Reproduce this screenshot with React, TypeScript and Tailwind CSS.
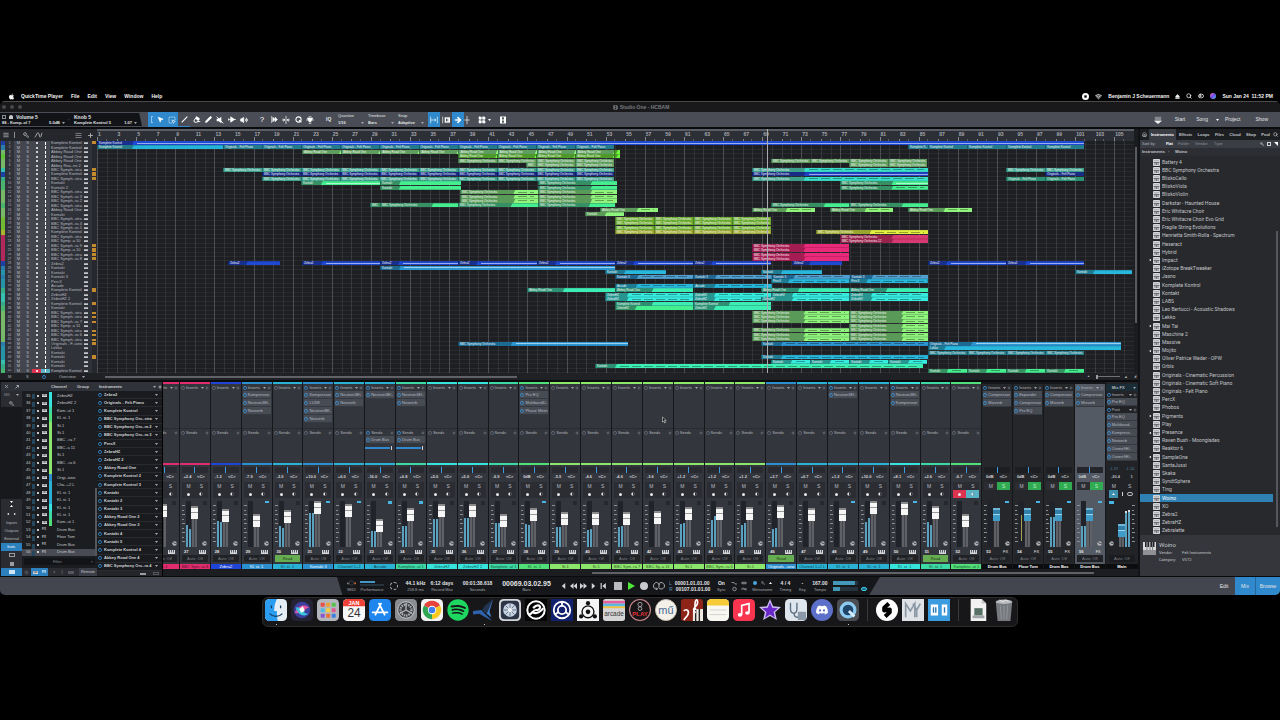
import type { ReactNode } from "react";
import {
  AlignJustify,
  ArrowRight,
  AudioWaveform,
  Film,
  FoldHorizontal,
  GripVertical,
  House,
  LayoutGrid,
  MousePointer2,
  Pencil,
  Plus,
  Search,
  SquareDashedMousePointer,
  ToggleLeft,
  Volume2,
  Wifi,
  Wrench,
  X,
} from "lucide-react";
import { FaApple, FaDiscord, FaEject, FaEraser, FaSpotify } from "react-icons/fa";

/* ---------- data ---------- */

const CANVAS_START = 97;
const CANVAS_WIDTH = 1037;

type Tone = { dark: string; bright: string };

const tones: Record<string, Tone> = {
  royal: { dark: "bg-[#172f8f]", bright: "bg-[#1f49d2]" },
  navy: { dark: "bg-[#182b85]", bright: "bg-[#2140c4]" },
  teal: { dark: "bg-[#237c8b]", bright: "bg-[#22b4da]" },
  sky: { dark: "bg-[#1c6a94]", bright: "bg-[#2c95d2]" },
  steel: { dark: "bg-[#1f6591]", bright: "bg-[#519fce]" },
  cyan: { dark: "bg-[#1d7c94]", bright: "bg-[#28b8dc]" },
  aqua: { dark: "bg-[#27958f]", bright: "bg-[#35ecdf]" },
  sea: { dark: "bg-[#3b9f8c]", bright: "bg-[#35dfca]" },
  mint: { dark: "bg-[#2c9174]", bright: "bg-[#3deeb4]" },
  jade: { dark: "bg-[#359164]", bright: "bg-[#45ef8f]" },
  leaf: { dark: "bg-[#5a9a58]", bright: "bg-[#8ef47c]" },
  fern: { dark: "bg-[#5f9c60]", bright: "bg-[#8ef47c]" },
  grass: { dark: "bg-[#4d9a2b]", bright: "bg-[#6dfa3c]" },
  lime: { dark: "bg-[#6aaa31]", bright: "bg-[#8de04a]" },
  olive: { dark: "bg-[#99a52e]", bright: "bg-[#e2ee40]" },
  wine: { dark: "bg-[#97234c]", bright: "bg-[#d53a70]" },
  pink: { dark: "bg-[#a51c52]", bright: "bg-[#e92a7b]" },
};

type Clip = { from: number; to: number; label: string; tone: string; split?: number; notes?: "light" | "dark" };

const clip = (from: number, to: number, label: string, tone: string, split?: number, notes?: "light" | "dark"): Clip => ({
  from,
  to,
  label,
  tone,
  split,
  notes,
});

const repeat = (from: number, count: number, label: string, tone: string, split?: number, step = 39.12): Clip[] =>
  Array.from({ length: count }, (_, i) => ({
    from: from + i * step,
    to: from + (i + 1) * step,
    label,
    tone,
    split: split ? from + i * step + split : undefined,
    notes: split ? "dark" : undefined,
  }));

const BBC = "BBC Symphony Orchestra";
const FELT = "Originals - Felt Piano";
const KK = "Komplete Kontrol";
const ARO = "Abbey Road One";

const strings = [clip(752, 849, BBC, "leaf", 803, "dark"), clip(849, 928, BBC, "leaf", 901, "dark")];
const divisi = [clip(460, 538, BBC, "leaf", 513, "dark"), clip(538, 617, BBC, "leaf", 590, "dark")];

const clips: Record<number, Clip[]> = {
  1: [clip(97, 1084, KK, "royal", 131, "light")],
  2: [clip(97, 223, KK, "teal", 131), ...repeat(223, 10, FELT, "teal"), clip(908, 928, "Komplete K..", "teal"), ...repeat(928, 4, KK, "teal")],
  3: [...repeat(302, 8, ARO, "fern", 37), clip(614, 620, "", "grass", 614)],
  4: [...repeat(458, 4, ARO, "grass", 37), clip(614, 620, "", "grass", 614)],
  5: [...repeat(458, 4, BBC, "fern"), ...repeat(771, 4, BBC, "fern")],
  6: [clip(526, 536, "BBC", "fern"), ...repeat(536, 2, BBC, "fern"), ...repeat(849, 2, BBC, "fern")],
  7: [...repeat(223, 10, BBC, "sea"), clip(752, 928, BBC, "sea", 803, "dark"), ...repeat(1006, 2, BBC, "sea")],
  8: [...repeat(262, 9, BBC, "navy"), clip(752, 928, BBC, "navy", 803, "light"), clip(1045, 1084, FELT, "navy")],
  9: [...repeat(262, 9, BBC, "sea"), clip(752, 928, BBC, "sea", 803, "dark"), ...repeat(1006, 2, FELT, "mint")],
  10: [clip(301, 380, "Kontakt", "jade", 320, "light"), clip(380, 461, "Kontakt", "jade", 398), clip(538, 617, BBC, "jade", 590), clip(840, 928, BBC, "jade", 891, "light")],
  11: [clip(380, 461, "Kontakt", "jade", 398), clip(538, 617, BBC, "jade", 590), clip(840, 928, BBC, "jade", 891, "dark")],
  12: divisi,
  13: divisi,
  14: divisi,
  15: [
    clip(370, 380, "BBC", "jade"),
    clip(380, 458, BBC, "jade", 431),
    clip(458, 538, BBC, "jade", 510),
    clip(538, 615, BBC, "jade", 588),
    clip(771, 849, BBC, "jade", 823),
    clip(849, 928, BBC, "jade", 901),
  ],
  16: [clip(600, 658, ARO, "leaf", 636, "dark"), clip(752, 815, ARO, "leaf", 785, "dark"), clip(830, 893, ARO, "leaf", 864, "dark"), clip(908, 972, ARO, "leaf", 943, "dark")],
  17: [clip(585, 624, "Kontakt", "leaf", 604)],
  18: repeat(615, 4, BBC, "lime"),
  19: repeat(615, 4, BBC, "lime"),
  20: repeat(615, 4, BBC, "lime"),
  21: [...repeat(615, 4, BBC, "olive"), clip(816, 928, BBC, "olive", 869, "dark")],
  22: [clip(840, 928, BBC, "wine", 891)],
  23: [clip(840, 928, BBC + " 12", "wine", 891)],
  24: [clip(752, 849, BBC, "pink", 803)],
  25: [clip(752, 849, BBC, "pink", 803)],
  26: [clip(752, 849, BBC, "pink", 803)],
  27: [clip(752, 849, BBC, "pink", 803)],
  28: [
    clip(228, 280, "Zebra2", "royal", 245),
    clip(302, 380, "Zebra2", "royal", 320, "light"),
    clip(380, 458, "Zebra2", "royal", 397, "light"),
    clip(458, 537, "Zebra2", "royal", 475, "light"),
    clip(537, 615, "Zebra2", "royal", 554, "light"),
    clip(615, 693, "Zebra2", "royal", 632, "light"),
    clip(693, 771, "Zebra2", "royal", 710, "light"),
    clip(792, 842, "Zebra2", "royal", 808),
    clip(928, 1006, "Zebra2", "royal", 945, "light"),
    clip(1006, 1084, "Zebra2", "royal", 1024, "light"),
  ],
  29: [clip(380, 615, "Kontakt", "sky", 398, "light")],
  30: [clip(605, 666, "Kontakt", "cyan", 623), clip(761, 822, "Kontakt", "cyan", 780), clip(1075, 1132, "Kontakt", "cyan", 1092)],
  31: repeat(615, 4, "Kontakt 3", "steel", 21, 78.25),
  32: repeat(771, 2, "PercX", "cyan", 16, 78.25),
  33: repeat(615, 2, "Arcade", "cyan", 20, 78.25),
  34: [clip(527, 615, ARO, "mint", 562), clip(615, 693, ARO, "mint", 651), clip(761, 849, ARO, "mint", 797), clip(849, 928, ARO, "mint", 885)],
  35: [clip(605, 693, "ZebraHZ", "aqua", 626, "dark"), clip(693, 771, "ZebraHZ", "aqua", 713, "dark"), clip(771, 849, "ZebraHZ", "aqua", 791, "dark"), clip(849, 928, "ZebraHZ", "aqua", 870, "dark")],
  36: [clip(605, 693, "ZebraHZ", "aqua", 626, "dark"), clip(693, 771, "ZebraHZ", "aqua", 713, "dark"), clip(761, 849, "ZebraHZ", "aqua", 791, "dark"), clip(849, 928, "ZebraHZ", "aqua", 870, "dark")],
  37: [clip(615, 693, KK, "mint", 651), clip(693, 771, KK, "mint", 728)],
  38: [clip(615, 693, "ZebraHZ", "jade", 634), clip(693, 771, "ZebraHZ", "mint", 713)],
  39: strings,
  40: strings,
  41: strings,
  42: [clip(849, 928, BBC, "leaf", 901, "dark")],
  43: strings,
  44: strings,
  45: strings,
  46: [clip(458, 628, BBC, "sky", 510, "light"), clip(761, 928, "Kontakt", "sky", 780, "dark"), clip(928, 1121, FELT, "sky", 970, "light")],
  47: [clip(928, 1121, "Lekko", "cyan", 943)],
  48: repeat(928, 4, BBC, "teal"),
  49: [clip(761, 928, "Kontakt", "cyan", 780, "dark")],
  50: repeat(771, 4, "Kontakt", "aqua", 19),
  51: [clip(595, 923, "Kontakt", "mint", 614, "dark")],
  52: repeat(928, 4, "Kontakt", "jade", 18),
};

const trackNames = [
  KK, KK, ARO, ARO, ARO, "Abbey Roa..ne 2", "BBC Symph..stra", KK, "BBC Symph..stra", "Kontakt", "Kontakt 2",
  "BBC Symph..stra", "BBC Symph..ra 3", "BBC Symph..ra 2", "BBC Symph..stra", ARO, "Kontakt", "BBC Symph..stra",
  "BBC Symph..ra 4", "BBC Symph..ra 5", KK, "BBC Symph..stra", "BBC Symp..a 10", "BBC Symph..ra 9", "BBC Symp..a 10",
  "BBC Symph..stra", "BBC Symph..ra 8", "Zebra2", "Kontakt", "Kontakt", "Kontakt 3", "PercX", "Arcade", KK, "ZebraHZ",
  "ZebraHZ 2", KK, "Kontakt", "BBC Symph..stra", "BBC Symph..stra", "BBC Symph..ra 7", "BBC Symp..a 11",
  "BBC Symph..stra", "BBC Symph..ra 6", "BBC Symph..stra", "Originals - F..iano", "Lekko", "Kontakt", "Kontakt",
  "Kontakt", "Kontakt", KK,
];

const automated = [1, 7, 8, 9, 24, 25, 26, 27, 34, 37, 46, 49];
const halfAutomated = [39, 40, 41, 43, 44, 45];

function trackColor(n: number) {
  if (n === 1 || n === 8 || n === 28) return "bg-[#1e3fa8]";
  if (n === 2 || n === 29 || n === 31 || n === 46) return "bg-[#2a7cab]";
  if (n === 7 || n === 35 || n === 36 || n === 50) return "bg-[#35c0b0]";
  if (n === 9 || n === 34 || n === 37 || n === 51) return "bg-[#37ab86]";
  if (n >= 30 && n <= 33) return "bg-[#2593a8]";
  if (n >= 47 && n <= 49) return "bg-[#2593a8]";
  if (n >= 22 && n <= 27) return "bg-[#b3285c]";
  if (n === 21) return "bg-[#a9b52e]";
  if (n >= 18 && n <= 20) return "bg-[#71bb33]";
  if (n === 10 || n === 11 || n === 15 || n === 38 || n === 52) return "bg-[#48b46d]";
  if (n === 4) return "bg-[#60c43a]";
  return "bg-[#77b868]";
}

type Strip = {
  n: number;
  name: string;
  db: string;
  fader: number;
  meter?: [number, number];
  color?: string;
  inserts?: string[];
  send?: boolean;
  read?: boolean;
  clip?: "thin" | "full";
};

const C = {
  pink: "bg-[#e12c6d]",
  blue: "bg-[#2045d6]",
  sky: "bg-[#2c8fce]",
  cyan: "bg-[#29b2d4]",
  mint: "bg-[#3cd9a4]",
  aqua: "bg-[#36e4dd]",
  green: "bg-[#50df78]",
  lime: "bg-[#8de66c]",
};

// fader = cap offset from the top of its travel, meter = [left, right] heights
const strips: Strip[] = [
  { n: 27, name: "BBC Sym..ra 8", db: "+2.4", fader: 5, meter: [22, 18], color: C.pink },
  { n: 28, name: "Zebra2", db: "-1.2", fader: 8, meter: [26, 25], color: C.blue },
  { n: 29, name: "Kl. st. 1", db: "-7.9", fader: 13, color: C.sky, inserts: ["Kompressor", "Neutron3El..", "Neoverb"], clip: "thin" },
  { n: 30, name: "Kl. st. 1", db: "-2.0", fader: 9, meter: [21, 19], color: C.cyan, read: true },
  { n: 31, name: "Kontakt 3", db: "+10.0", fader: 0, meter: [34, 34], color: C.sky, inserts: ["Kompressor", "LUXE", "Neutron3El..", "Neoverb"], clip: "thin" },
  { n: 32, name: "Channel 1+2", db: "+6.0", fader: 3, color: C.cyan, inserts: ["Neutron3El..", "Neoverb"], clip: "thin" },
  { n: 33, name: "Arcade", db: "-16.0", fader: 18, meter: [16, 16], color: C.cyan, inserts: ["Neutron3El.."], send: true, clip: "full" },
  { n: 34, name: "Komplete..ut 1", db: "+0.8", fader: 7, meter: [21, 21], color: C.mint, inserts: ["Neutron3El..", "Neoverb"], send: true, clip: "full" },
  { n: 35, name: "ZebraHZ", db: "+5.0", fader: 3, meter: [28, 28], color: C.aqua },
  { n: 36, name: "ZebraHZ 2", db: "+5.0", fader: 3, meter: [29, 29], color: C.aqua },
  { n: 37, name: "Komplete..ut 1", db: "-6.9", fader: 13, meter: [24, 24], color: C.mint },
  { n: 38, name: "Kl. st. 1", db: "0dB", fader: 7, meter: [23, 22], color: C.green, inserts: ["Pro EQ", "MultibandD..", "Phase Meter"], clip: "thin" },
  { n: 39, name: "St.1", db: "-5.5", fader: 11, meter: [20, 20], color: C.lime },
  { n: 40, name: "St.1", db: "-4.6", fader: 11, meter: [17, 18], color: C.lime },
  { n: 41, name: "BBC Sym..ra 7", db: "-4.6", fader: 11, meter: [20, 21], color: C.lime },
  { n: 42, name: "BBC Sy..a 11", db: "-3.6", fader: 10, color: C.lime },
  { n: 43, name: "St.1", db: "+1.2", fader: 6, meter: [23, 24], color: C.lime },
  { n: 44, name: "BBC Sym..ra 6", db: "+1.2", fader: 6, meter: [27, 31], color: C.lime },
  { n: 45, name: "St.1", db: "+1.2", fader: 6, meter: [22, 24], color: C.lime },
  { n: 46, name: "Originals ..iano", db: "+3.7", fader: 4, meter: [18, 19], color: C.sky, read: true },
  { n: 47, name: "Channel 1+2 L", db: "+0.7", fader: 7, color: C.cyan },
  { n: 48, name: "Kl. st. 1", db: "+1.2", fader: 7, color: C.cyan, inserts: ["Neutron3El.."], clip: "thin" },
  { n: 49, name: "Kl. st. 1", db: "+10.0", fader: 0, meter: [25, 29], color: C.cyan },
  { n: 50, name: "Kl. st. 1", db: "+8.1", fader: 1, color: C.aqua, inserts: ["Neutron3El..", "Kompressor"], clip: "thin" },
  { n: 51, name: "Kl. st. 1", db: "+2.6", fader: 5, meter: [25, 22], color: C.mint, read: true },
  { n: 52, name: "Komplete..ut 1", db: "-6.7", fader: 13, color: C.green },
  { n: 53, name: "Drum Bus", db: "0dB", fader: 7, inserts: ["Compressor", "Mixverb"], clip: "thin" },
  { n: 54, name: "Floor Tom", db: "0dB", fader: 7, inserts: ["Expander", "Compressor", "Pro EQ"], clip: "thin" },
  { n: 55, name: "Drum Bus", db: "0dB", fader: 7, meter: [30, 30], inserts: ["Compressor", "Mixverb"], clip: "thin" },
  { n: 56, name: "Drum Bus", db: "0dB", fader: 7, meter: [21, 21], inserts: ["Compressor", "Mixverb"], clip: "thin" },
];

const channelList: [number, string, string][] = [
  [35, "ZebraHZ", C.aqua], [36, "ZebraHZ 2", C.aqua], [37, "Kom..ut 1", C.mint], [38, "Kl. st. 1", C.green],
  [39, "St.1", C.lime], [40, "St.1", C.lime], [41, "BBC ..ra 7", C.lime], [42, "BBC..a 11", C.lime], [43, "St.1", C.lime],
  [44, "BBC ..ra 6", C.lime], [45, "St.1", C.lime], [46, "Origi..iano", C.sky], [47, "Cha..+2 L", C.cyan], [48, "Kl. st. 1", C.cyan],
  [49, "Kl. st. 1", C.cyan], [50, "Kl. st. 1", C.aqua], [51, "Kl. st. 1", C.mint], [52, "Kom..ut 1", C.green],
  [53, "Drum Bus", ""], [54, "Floor Tom", ""], [55, "Drum Bus", ""], [56, "Drum Bus", ""],
];

const rack = [
  "Zebra2", FELT, KK, "BBC Symphony Orc..stra", "BBC Symphony Orc..ra 2", "BBC Symphony Orc..ra 3", "PercX", "ZebraHZ",
  "ZebraHZ 2", ARO, "Komplete Kontrol 2", "Komplete Kontrol 3", "Kontakt", "Kontakt 2", "Kontakt 3", "Abbey Road One 2",
  "Abbey Road One 3", "Kontakt 4", "Kontakt 5", "Komplete Kontrol 4", "Abbey Road One 4", "BBC Symphony Orc..ra 4",
];

const library = [
  "Battery 4", BBC, "BliskoCello", "BliskoViola", "BliskoViolin", "Darkstar - Haunted House", "Eric Whitacre Choir",
  "Eric Whitacre Choir Evo Grid", "Fragile String Evolutions", "Henrietta Smith-Rolla - Spectrum", "Hexeract", "Hybrid",
  "Impact", "iZotope BreakTweaker", "Jasno", KK, "Kontakt", "LABS", "Leo Bertucci - Acoustic Shadows", "Lekko", "Mai Tai",
  "Maschine 2", "Massive", "Mojito", "Oliver Patrice Weder - OPW", "Orbis", "Originals - Cinematic Percussion",
  "Originals - Cinematic Soft Piano", FELT, "PercX", "Phobos", "Pigments", "Play", "Presence", "Raven Bush - Moonglades",
  "Reaktor 6", "SampleOne", "SantaJussi", "Skaka", "SyndtSphere", "Ting", "Woino", "XO", "Zebra2", "ZebraHZ", "Zebralette",
];
const expandable = ["Impact", "Mai Tai", "Mojito", "Pigments", "Presence", "SampleOne"];

/* ---------- small pieces ---------- */

function Down({ className = "text-[#a5a8ae]" }: { className?: string }) {
  return (
    <svg viewBox="0 0 6 4" className={`h-[2px] w-[3px] shrink-0 ${className}`}>
      <path d="M0 0h6L3 4z" fill="currentColor" />
    </svg>
  );
}

function Keys({ className = "h-[3px] w-[5px]" }: { className?: string }) {
  return (
    <svg viewBox="0 0 7 4" preserveAspectRatio="none" className={`shrink-0 ${className}`}>
      <path d="M0 0h7v4H0z" fill="#5d6067" />
      <path d="M0 0h1v2.6h1V0h1v2.6h1V0h1v2.6h1V0h1v4H0z" fill="#d3d4d7" />
    </svg>
  );
}

function Power({ on = true }: { on?: boolean }) {
  return (
    <svg viewBox="0 0 10 10" className={`size-[4px] shrink-0 ${on ? "text-[#3b9be2]" : "text-[#70737a]"}`}>
      <circle cx="5" cy="5" r="4" fill="none" stroke="currentColor" strokeWidth="1.6" />
      <path d="M5 0v4" stroke="currentColor" strokeWidth="1.6" />
    </svg>
  );
}

function HalfDot() {
  return (
    <svg viewBox="0 0 10 10" className="size-[4px]">
      <circle cx="5" cy="5" r="4" fill="none" stroke="#8b8e95" strokeWidth="1" />
      <path d="M5 1a4 4 0 0 0 0 8z" fill="#e3e4e6" />
    </svg>
  );
}

function PanKnob() {
  return (
    <svg viewBox="0 0 10 10" className="size-[5px]">
      <circle cx="5" cy="5" r="4.5" fill="#b0b2b6" />
      <path d="M5 5L2 1M5 5h4" stroke="#34363e" strokeWidth="1.5" />
    </svg>
  );
}

/* ---------- mac menu bar ---------- */

function MenuBar() {
  return (
    <nav className="flex h-[10px] items-center justify-between pr-[7px] pl-[8px] text-[5px] font-bold text-[#f2f2f2]">
      <div className="flex items-center gap-[8px]">
        <FaApple className="mr-[-2px] size-[7px]" />
        <a href="#app">QuickTime Player</a>
        {["File", "Edit", "View", "Window", "Help"].map((item) => (
          <a key={item} href={`#${item}`}>
            {item}
          </a>
        ))}
      </div>
      <div className="flex items-center gap-[6px]">
        <svg viewBox="0 0 12 12" className="size-[7px]">
          <circle cx="6" cy="6" r="6" fill="#fff" />
          <rect x="4" y="4" width="4" height="4" fill="#000" />
        </svg>
        <Wifi className="size-[7px]" strokeWidth={3} />
        <span>Benjamin J Scheuermann</span>
        <FaEject className="size-[5px]" />
        <Search className="size-[6px]" strokeWidth={3} />
        <ToggleLeft className="size-[6px]" strokeWidth={3} />
        <span className="size-[6px] rounded-full bg-linear-to-br from-[#ff5ea8] via-[#6c4be8] to-[#2bc8e8]" />
        <span>Sun Jan 24&nbsp; 11:52 PM</span>
      </div>
    </nav>
  );
}

/* ---------- toolbar ---------- */

function Tool({ label, active = false, wide = false, children }: { label: string; active?: boolean; wide?: boolean; children: ReactNode }) {
  return (
    <button
      aria-label={label}
      className={`flex h-full items-center justify-center text-white ${wide ? "w-[15px]" : "w-[12px]"} ${active ? "bg-[#2f89cc]" : ""}`}
    >
      {children}
    </button>
  );
}

function Choice({ label, value }: { label: string; value: string }) {
  return (
    <label className="flex w-[30px] flex-col gap-[2px] text-[4px] text-[#e0e1e4]">
      {label}
      <span className="flex items-center pr-[4px]">
        <select className="min-w-0 flex-1 appearance-none bg-transparent text-[4px] leading-[5px] font-bold outline-none">
          <option>{value}</option>
        </select>
        <Down />
      </span>
    </label>
  );
}

function Toolbar() {
  return (
    <div className="flex h-[15px] items-center bg-[#4a4d56] text-[5px] text-[#e2e3e6]">
      <div className="flex h-[13px] w-[142px] items-center bg-[#111317] pr-[5px] pl-[2px] text-[4px] [clip-path:polygon(0_0,98%_0,100%_100%,0_100%)]">
        <div className="flex w-[66px] flex-col gap-[1px]">
          <span className="flex items-center gap-[3px] text-[5px] font-bold">
            <span className="size-[4px] border border-[#8b8e95]" />
            <span className="size-[4px] rounded-t-full bg-[#c9cacd]" />
            Volume 5
          </span>
          <span className="flex items-center justify-between pr-[3px] font-bold">
            <span>88 - Komp..ol 7</span>
            <span className="flex items-center gap-[2px]">
              5.0dB <Down />
            </span>
          </span>
        </div>
        <span className="w-[6px] text-[#6c6f76]">‹</span>
        <div className="flex flex-1 flex-col gap-[1px]">
          <span className="text-[5px] font-bold">Knob 5</span>
          <span className="flex items-center justify-between font-bold">
            <span>Komplete Kontrol 5</span>
            <span className="flex items-center gap-[2px]">
              1.07 <Down />
            </span>
          </span>
        </div>
      </div>

      <div className="ml-[6px] flex h-full">
        <span className="flex h-full w-[6px] items-center bg-[#2f89cc] pl-[3px]">
          <span className="h-[7px] w-[2px] border-y border-l border-[#8dc3ee]" />
        </span>
        <Tool label="Arrow" active>
          <MousePointer2 className="size-[7px] fill-white" />
        </Tool>
        <Tool label="Range" active>
          <SquareDashedMousePointer className="size-[8px]" />
        </Tool>
        <button aria-label="Split" className="flex w-[12px] items-center justify-center border-b border-[#2f89cc] text-white">
          <svg viewBox="0 0 10 10" className="size-[7px]">
            <path d="M1 9L9 1" stroke="currentColor" strokeWidth="1.6" />
          </svg>
        </button>
        <Tool label="Eraser">
          <FaEraser className="size-[7px] -rotate-12" />
        </Tool>
        <Tool label="Paint">
          <Pencil className="size-[7px] fill-white" strokeWidth={3} />
        </Tool>
        <Tool label="Mute">
          <svg viewBox="0 0 12 12" className="size-[8px]">
            <path d="M1 4h3l4-3v10L4 8H1z" fill="#fff" />
            <path d="M1 1l10 10" stroke="#fff" strokeWidth="1.4" />
          </svg>
        </Tool>
        <Tool label="Bend">
          <svg viewBox="0 0 12 10" className="h-[7px] w-[8px]">
            <path d="M0 5h12M4 1v8l6-4zM1 3v4" stroke="#fff" fill="#fff" strokeWidth="1" />
          </svg>
        </Tool>
        <Tool label="Listen">
          <Volume2 className="size-[8px] fill-white" />
        </Tool>
      </div>
      <div className="ml-[6px] flex h-full">
        <Tool label="Help">
          <span className="text-[8px] leading-none">?</span>
        </Tool>
        <Tool label="Strip silence">
          <svg viewBox="0 0 12 12" className="size-[7px]">
            <path d="M1 0v12M3 2v8l4-4zM7 2v8l4-4z" stroke="#fff" fill="#fff" />
          </svg>
        </Tool>
        <Tool label="Snap edges">
          <FoldHorizontal className="size-[8px]" strokeWidth={3} />
        </Tool>
        <Tool label="Quantize">
          <svg viewBox="0 0 12 12" className="size-[7px]">
            <circle cx="6" cy="6" r="4.5" fill="none" stroke="#fff" strokeWidth="1.8" />
            <path d="M7 7l4 4" stroke="#fff" strokeWidth="1.8" />
          </svg>
        </Tool>
        <Tool label="Macro">
          <svg viewBox="0 0 12 12" className="size-[8px]">
            <path d="M0 6h12M2 3h8l-3 6H5zM4 1h4M4 11h4" stroke="#fff" fill="#fff" strokeWidth="1" />
          </svg>
        </Tool>
      </div>
      <span className="ml-[10px] w-[12px] text-[5px] font-bold">IQ</span>
      <Choice label="Quantize" value="1/16" />
      <Choice label="Timebase" value="Bars" />
      <Choice label="Snap" value="Adaptive" />
      <div className="flex h-full">
        <Tool label="Autoscroll" active>
          <svg viewBox="0 0 12 12" className="size-[8px]">
            <path d="M1 1v10M11 1v10M1 6h8M7 4l2 2-2 2" stroke="#fff" fill="none" />
          </svg>
        </Tool>
        <Tool label="Cursor follow">
          <svg viewBox="0 0 12 12" className="size-[8px]">
            <path d="M1 1v10" stroke="#fff" />
            <rect x="4" y="2" width="8" height="8" fill="#fff" />
            <path d="M6 4h4v1H8v2h2v1H6z" fill="#4a4d56" />
          </svg>
        </Tool>
        <Tool label="Ripple" active>
          <ArrowRight className="size-[8px]" strokeWidth={5} />
        </Tool>
        <button aria-label="Nudge" className="flex w-[6px] items-center justify-center">
          <svg viewBox="0 0 8 12" className="h-[8px] w-[6px]">
            <path d="M4 0v12M0 6h8" stroke="#fff" />
          </svg>
        </button>
        <button aria-label="Grid" className="ml-[8px] flex w-[15px] items-center gap-[2px] text-white">
          <LayoutGrid className="size-[8px] fill-white" />
          <Down className="text-white" />
        </button>
        <Tool label="Video" wide>
          <svg viewBox="0 0 10 12" className="ml-[4px] h-[8px] w-[6px]">
            <path d="M0 0h10v12H0zM3.500 1.500v3.500h3V1.500zM3.500 7v3.500h3V7z" fill="#fff" fillRule="evenodd" />
          </svg>
        </Tool>
      </div>
      <div className="ml-auto flex items-center pr-[12px]">
        <svg viewBox="0 0 10 10" className="mr-[13px] h-[8px] w-[8px]">
          <path d="M1 1h8v5H1z" fill="#85888f" />
          <path d="M0 6h10L5 10z" fill="#f2f2f2" />
        </svg>
        <a href="#start" className="mr-[11px]">Start</a>
        <a href="#song" className="mr-[8px]">Song</a>
        <Down className="mr-[6px] text-white" />
        <a href="#project" className="mr-[15px]">Project</a>
        <a href="#show">Show</a>
      </div>
    </div>
  );
}

/* ---------- arrangement ---------- */

function TrackList() {
  return (
    <ol className="grid h-[232px] auto-rows-fr text-[4px] leading-none">
      {trackNames.map((name, i) => {
        const n = i + 1;
        const armed = n === 52;
        return (
          <li key={n} className="flex min-h-0 items-center overflow-hidden bg-[#303239] text-[#b9bbc0]">
            <span className={`ml-px h-full w-[4px] ${trackColor(n)}`} />
            <span className="w-[9px] text-center text-[3px]">{n}</span>
            <span className="flex h-full w-[36px] items-center bg-[#43464f] text-center">
              <button aria-label={`Mute ${n}`} className="w-[9px]">M</button>
              <button aria-label={`Solo ${n}`} className="w-[9px]">S</button>
              <button aria-label={`Record ${n}`} className={`flex h-full w-[9px] items-center justify-center ${armed ? "bg-[#dc3350]" : ""}`}>
                <span className="size-[2px] rounded-full bg-white" />
              </button>
              <button aria-label={`Monitor ${n}`} className={`flex h-full w-[9px] items-center justify-center ${armed ? "bg-[#58b4c4]" : ""}`}>
                <span className="h-[3px] w-px bg-white" />
              </button>
            </span>
            <span className="ml-[1px] w-[33px] overflow-hidden whitespace-nowrap">{name}</span>
            <Keys className="h-[2px] w-[4px]" />
            <span className="ml-auto flex h-full w-[5px] items-end border-b border-[#26282d] bg-[#26282d]">
              <span
                className={`w-[4px] ${automated.includes(n) ? "h-full bg-[#c48a2e]" : halfAutomated.includes(n) ? "h-[2px] bg-[#c48a2e]" : ""}`}
              />
            </span>
          </li>
        );
      })}
    </ol>
  );
}

function ClipBlock({ item }: { item: Clip }) {
  const tone = tones[item.tone];
  const width = item.to - item.from;
  const head = item.split !== undefined ? item.split - item.from : width;
  return (
    <div
      className={`absolute top-0 flex h-[4px] overflow-hidden border-l border-black/25 ${tone.dark}`}
      style={{ left: `${((item.from - CANVAS_START) / CANVAS_WIDTH) * 100}%`, width: `${(width / CANVAS_WIDTH) * 100}%` }}
    >
      <span className="shrink-0 overflow-hidden pl-[1px] text-[3px] leading-[4px] whitespace-nowrap text-white/90" style={{ width: `${(head / width) * 100}%` }}>
        {item.label}
      </span>
      {item.split !== undefined && (
        <span className={`flex flex-1 items-center pl-[5px] [clip-path:polygon(2px_0,100%_0,100%_100%,0_100%)] ${tone.bright}`}>
          {item.notes === "light" && <span className="h-px flex-1 bg-white/55" />}
          {item.notes === "dark" && <span className="mr-[4px] h-px flex-1 bg-[repeating-linear-gradient(90deg,#0005_0_9px,transparent_9px_12px)]" />}
        </span>
      )}
    </div>
  );
}

function Timeline() {
  return (
    <div className="relative min-w-0 flex-1 overflow-hidden bg-[#1d1f23]">
      <div className="flex h-[12px] border-t-2 border-[#5b5e66] bg-[#2d2f37] text-[5px] leading-[6px] font-bold text-[#a5a8ae]">
        {Array.from({ length: 53 }, (_, i) => (
          <div key={i} className="flex min-w-0 flex-1 items-start">
            <span className={`w-px shrink-0 self-end bg-[#82858c] ${i % 2 === 0 ? "h-[4px]" : "h-[2px]"}`} />
            <span className="w-0 overflow-visible">{i * 2 + 1}</span>
            <span className="ml-auto h-[2px] w-px self-end bg-[#5c5f66]" />
            <span className="w-1/2" />
          </div>
        ))}
      </div>
      <div className="relative">
        <div className="absolute inset-0 flex">
          {Array.from({ length: 106 }, (_, i) => (
            <span key={i} className={`flex-1 border-l ${i % 4 === 0 ? "border-[#4a4c51]" : i % 2 === 0 ? "border-[#36383d]" : "border-[#2e3034]"}`} />
          ))}
        </div>
        <div className="relative grid h-[232px] auto-rows-fr">
          {trackNames.map((_, i) => (
            <div key={i} className="relative min-h-0 border-b border-white/5">
              {(clips[i + 1] ?? []).map((item, k) => (
                <ClipBlock key={k} item={item} />
              ))}
            </div>
          ))}
        </div>
      </div>
      <span className="absolute inset-y-0 left-[64.6%] w-px bg-[#a9abb0]" />
    </div>
  );
}

function Arrangement() {
  return (
    <section>
      <div className="flex">
        <div className="w-[97px] shrink-0">
          <div className="flex h-[12px] items-center gap-[5px] bg-[#25272c] px-[3px] text-[#b4b6bb]">
            <AlignJustify className="size-[6px]" strokeWidth={3} />
            <span className="h-[6px] w-px bg-[#8b8e95]" />
            <Wrench className="ml-[3px] size-[6px] -scale-x-100" strokeWidth={3} />
            <svg viewBox="0 0 16 10" className="h-[6px] w-[9px]">
              <path d="M1 9C4 9 4 1 7 1s2 8 4 8 2-8 4-8" fill="none" stroke="currentColor" strokeWidth="1.6" />
            </svg>
            <AlignJustify className="ml-auto size-[7px]" strokeWidth={2} />
            <Plus className="size-[7px]" strokeWidth={3} />
          </div>
          <TrackList />
        </div>
        <Timeline />
        <div className="flex w-[4px] shrink-0 flex-col bg-[#1a1c20] pt-[18px]">
          <span className="mx-[1px] h-[176px] w-[2px] bg-[#585a5f]" />
        </div>
      </div>
      <div className="flex h-[7px] items-center bg-[#1f2125] text-[4px] text-[#b4b6bb]">
        <div className="flex w-[97px] shrink-0 items-center pl-[8px]">
          <span className="w-[18px]">M</span>
          <span className="w-[16px]">S</span>
          <Power />
          <span className="mr-[6px] ml-[13px]">Overview</span>
          <Down />
        </div>
        <div className="flex flex-1 items-center pr-[2px] pl-[8px]">
          <span className="h-[2px] w-[40%] bg-[#606267]" />
          <span className="mr-[6px] ml-auto text-[3px]">▲</span>
          <span className="h-[4px] w-[2px] bg-[#9a9ca1]" />
          <span className="h-px w-[22px] bg-[#707277]" />
          <span className="ml-[4px] text-[4px]">▲</span>
          <span className="ml-[6px] text-[3px]">◢</span>
        </div>
      </div>
    </section>
  );
}

/* ---------- mixer ---------- */

function MixerTools() {
  return (
    <div className="flex w-[22px] shrink-0 flex-col items-stretch bg-[#17191d] pl-px text-center text-[4px] leading-[8px] text-[#b9bbc0]">
      <div className="flex h-[9px] items-center justify-between bg-[#303239] px-[3px]">
        <X className="size-[5px]" strokeWidth={3} />
        <svg viewBox="0 0 8 8" className="size-[4px]">
          <path d="M1 7L7 1M3 1h4v4" stroke="currentColor" strokeWidth="1.6" fill="none" />
        </svg>
      </div>
      <button className="flex h-[8px] items-center justify-center gap-[6px] bg-[#2a2c31]">
        I/O <Down />
      </button>
      <button aria-label="Settings" className="flex h-[8px] items-center justify-center bg-[#2a2c31]">
        <Wrench className="size-[5px] -scale-x-100" strokeWidth={3} />
      </button>
      <div className="mt-auto flex flex-col bg-[#2a2c31]">
        <button aria-label="Collapse" className="flex h-[10px] flex-col items-center justify-center gap-[2px]">
          <Down className="text-white" />
          <Down className="rotate-180 text-white" />
        </button>
        <button aria-label="Narrow" className="flex h-[10px] items-center justify-center gap-[3px]">
          <Down className="-rotate-90 text-white" />
          <Down className="rotate-90 text-white" />
        </button>
        {["Inputs", "Outputs", "External"].map((label) => (
          <button key={label} className="h-[8px]">
            {label}
          </button>
        ))}
        <button className="h-[8px] bg-[#2b80bd] text-white">Instr.</button>
        <button aria-label="Groups" className="flex h-[8px] items-center justify-center">
          <span className="h-[4px] w-[6px] border border-[#9a9ca1]" />
        </button>
        <button aria-label="Lock" className="flex h-[9px] items-center justify-center">
          <span className="size-[4px] bg-[#9a9ca1]" />
        </button>
        <button aria-label="Console" className="flex h-[8px] items-center justify-center bg-[#2b80bd]">
          <span className="h-[4px] w-[6px] bg-[#cfe6f7]" />
        </button>
      </div>
    </div>
  );
}

function ChannelList() {
  return (
    <div className="flex w-[75px] shrink-0 flex-col bg-[#1b1d21] text-[4px] leading-none text-[#c6c8cc]">
      <div className="flex h-[9px] items-center bg-[#303239] pl-[29px] font-bold">
        <span className="w-[26px]">Channel</span>
        <span>Group</span>
      </div>
      <div className="flex pt-[1px]">
        <ul className="grid h-[164px] flex-1 auto-rows-fr">
          {channelList.map(([n, name, color]) => (
            <li key={n} className={`flex min-h-0 items-center ${n === 56 ? "bg-[#484b53]" : ""}`}>
              <span className="w-[10px] pl-[4px]">{n}</span>
              <span className="h-[5px] w-[3px] self-end bg-[#24475e]" />
              <span className="ml-[2px] size-[2px] rounded-full bg-white" />
              <span className="flex w-[10px] justify-center text-[3px] font-bold">{n > 52 ? "FX" : <Keys className="h-[3px] w-[5px]" />}</span>
              <span className={`h-full w-[3px] ${color}`} />
              <span className="pl-[5px]">{name}</span>
            </li>
          ))}
        </ul>
        <span className="mt-[96px] h-[68px] w-[2px] bg-[#55575c]" />
      </div>
      <div className="mx-[2px] mt-[2px] flex items-center bg-[#131418]">
        <input aria-label="Filter channels" placeholder="Filter" className="h-[7px] w-full min-w-0 text-center text-[4px] outline-none placeholder:text-[#85888f]" />
        <span className="pr-[2px] text-[#85888f]">×</span>
      </div>
      <div className="mt-auto flex h-[8px] items-center bg-[#2a2c31]">
        <AudioWaveform className="mx-[2px] size-[5px] text-[#6c6f76]" />
        <span className="flex h-full w-[9px] items-center justify-center bg-[#2b80bd]">
          <Keys className="h-[3px] w-[5px]" />
        </span>
        <span className="flex h-full w-[8px] items-center justify-center bg-[#2b80bd] text-[3px] font-bold text-white">FX</span>
        <span className="mx-auto flex items-center gap-[4px] text-[#6c6f76]">
          <Down className="-rotate-90 text-[#6c6f76]" />
          <GripVertical className="size-[4px]" />
          <span className="h-[3px] w-[6px] bg-[#54575e]" />
        </span>
        <button className="h-full bg-[#3b3e46] px-[2px]">Remote</button>
      </div>
    </div>
  );
}

function InstrumentRack() {
  return (
    <div className="flex w-[66px] shrink-0 flex-col border-r border-black bg-[#191b1f] text-[4px] leading-none font-bold text-[#d3d4d7]">
      <div className="flex h-[9px] items-center justify-between bg-[#303239] pl-[2px]">
        Instruments
        <span className="flex items-center gap-[2px]">
          <Down />
          <Plus className="size-[4px]" strokeWidth={4} />
        </span>
      </div>
      <ul className="grid h-[180px] auto-rows-fr">
        {rack.map((name) => (
          <li key={name} className="flex min-h-0 items-center border-b border-[#292b30] pr-[4px] pl-[1px]">
            <Power />
            <span className="flex-1 overflow-hidden pl-[2px] whitespace-nowrap">{name}</span>
            <Down />
          </li>
        ))}
      </ul>
      <div className="mt-auto flex h-[5px] items-center justify-end gap-[7px] bg-[#232529] pr-[3px]">
        <span className="h-[2px] w-[6px] bg-[#9a9ca1]" />
        <span className="h-[3px] w-[6px] border border-[#55575c]" />
      </div>
    </div>
  );
}

function SlotHeader({ label, on = false, menu = true }: { label: string; on?: boolean; menu?: boolean }) {
  return (
    <div className="flex h-[7px] items-center gap-[1px] px-[1px] text-[4px] text-[#b4b6bb]">
      <Power on={on} />
      <span className="flex-1">{label}</span>
      {menu && <Down />}
      <Plus className="size-[4px] text-[#8b8e95]" strokeWidth={3} />
    </div>
  );
}

function Slot({ name }: { name: string }) {
  return (
    <li className="mx-[1px] flex h-[8px] items-center gap-[1px] overflow-hidden border-b border-[#363940] bg-[#474b54] text-[4px] text-[#b4bac2]">
      <Power />
      <span className="whitespace-nowrap">{name}</span>
    </li>
  );
}

function Fader({ label, offset, blue = false }: { label: string; offset: number; blue?: boolean }) {
  const travel = 33;
  return (
    <input
      type="range"
      aria-label={label}
      defaultValue={travel - offset}
      min={0}
      max={travel}
      className={`h-[46px] w-[7px] shrink-0 appearance-none [direction:rtl] [writing-mode:vertical-lr] [&::-webkit-slider-runnable-track]:w-[7px] [&::-webkit-slider-thumb]:h-[13px] [&::-webkit-slider-thumb]:w-[7px] [&::-webkit-slider-thumb]:appearance-none ${
        blue
          ? "[&::-webkit-slider-thumb]:bg-[linear-gradient(#6fb6d8_0_2px,#2f7fa8_2px_6px,#9fd4ec_6px_7px,#3f9cc8_7px)]"
          : "[&::-webkit-slider-thumb]:bg-[linear-gradient(#8a8a8a_0_2px,#f6f6f6_2px_6px,#9a9a9a_6px_7px,#f6f6f6_7px)]"
      }`}
      style={{ background: `linear-gradient(90deg, transparent 1px, #606166 1px 3px, #44464b 3px 4px, #606166 4px 6px, transparent 6px) 0 ${offset + 6}px / 7px 46px no-repeat` }}
    />
  );
}

function Scale() {
  return (
    <div className="flex h-[46px] w-[6px] shrink-0 flex-col justify-between pt-[4px] pb-[5px] pl-[2px]">
      {Array.from({ length: 9 }, (_, i) => (
        <span key={i} className={`h-px bg-[#8b8e95] ${i % 2 ? "w-[2px]" : "w-[3px]"}`} />
      ))}
    </div>
  );
}

function ChannelStrip({ strip, cut = false }: { strip: Strip; cut?: boolean }) {
  const fx = strip.n > 52;
  const selected = strip.n === 56;
  const armed = strip.n === 52;
  const hasInserts = !!strip.inserts;
  return (
    <article
      className={`flex min-w-0 flex-col overflow-hidden border-r border-[#16171a] ${cut ? "w-[31px] shrink-0" : "flex-1"} ${
        selected ? "bg-[#535a63]" : fx ? "bg-[#25272b]" : "bg-[#34363e]"
      }`}
    >
      <span className={`h-[2px] ${strip.color ?? "bg-[#16171a]"}`} />
      <SlotHeader label="Inserts" on={hasInserts} />
      <ul className="h-[37px]">{strip.inserts?.map((name) => <Slot key={name} name={name} />)}</ul>
      {fx ? (
        <div className="h-[34px]" />
      ) : (
        <div className="h-[34px] border-t border-[#2a2c31]">
          <SlotHeader label="Sends" on={strip.send} menu={false} />
          {strip.send && (
            <ul>
              <Slot name="Drum Bus" />
              <li className="mt-[2px] flex items-center">
                <span className="h-[2px] w-[25px] bg-[#2f89cc]" />
                <span className="ml-[1px] h-[4px] w-px bg-[#d3d4d7]" />
              </li>
            </ul>
          )}
        </div>
      )}
      <span className={`mt-[1px] h-[2px] ${strip.color ?? ""}`} />
      <div className={`mx-[2px] mt-[2px] flex h-[6px] justify-center ${selected ? "bg-[#24262b]" : fx ? "bg-[#1c1e22]" : "bg-[#292b31]"}`}>
        <span className="w-px bg-[#3b9be2]" />
      </div>
      <div className="mt-[1px] flex h-[6px] items-center text-center text-[4px] font-bold text-[#d3d4d7]">
        <span className="w-1/2">{strip.db}</span>
        <span className="w-1/2 pr-[3px]">&lt;C&gt;</span>
      </div>
      <div className="mx-[2px] mt-[2px] flex h-[8px] items-stretch text-[5px] leading-none text-[#b9bbc0]">
        <button aria-label={`Mute ${strip.n}`} className="flex-1 bg-[#2b2d33]">M</button>
        <button aria-label={`Solo ${strip.n}`} className={`flex-1 ${fx ? "bg-[#31ab52] text-[#b5f0c5]" : "bg-[#2b2d33]"}`}>S</button>
      </div>
      <div className="mx-[2px] flex h-[8px] items-stretch">
        {!fx && (
          <>
            <button aria-label={`Record ${strip.n}`} className={`flex flex-1 items-center justify-center ${armed ? "bg-[#dc3350]" : "bg-[#2b2d33]"}`}>
              <span className="size-[3px] rounded-full bg-[#e8e8ea]" />
            </button>
            <button aria-label={`Monitor ${strip.n}`} className={`flex flex-1 items-center justify-center ${armed ? "bg-[#58b4c4]" : "bg-[#2b2d33]"}`}>
              <HalfDot />
            </button>
          </>
        )}
      </div>
      <div className="mt-[3px] flex h-[47px]">
        <Scale />
        <span className="flex h-[46px] w-[5px] shrink-0 items-end gap-px bg-[#202329]">
          {strip.n === 54 && <span className="mb-[6px] ml-[2px] h-[26px] w-px bg-[#a8a24c]" />}
          {strip.meter?.map((h, i) => <span key={i} className="flex-1 bg-[#5ba0be]" style={{ height: h }} />)}
        </span>
        <Fader label={`Volume ${strip.n}`} offset={strip.fader} blue={fx} />
        <div className="flex flex-1 flex-col items-center justify-between pb-[2px] pl-[2px]">
          <span className={`w-[4px] ${strip.clip === "thin" ? "h-[2px] bg-[#49b4e4]" : strip.clip === "full" ? "h-[3px] bg-[#49b4e4]" : "h-[4px] bg-[#26282d]"}`} />
          <PanKnob />
        </div>
      </div>
      <div className="flex h-[7px] items-center justify-between px-[4px] text-[4px] font-bold text-[#e6e7e9]">
        {strip.n}
        {fx ? <span className="font-normal">FX</span> : <Keys className="h-[4px] w-[7px]" />}
      </div>
      <div className={`mx-[2px] h-[7px] text-center text-[4px] leading-[7px] whitespace-nowrap ${strip.read ? "bg-[#66ad51] text-[#1c3a12]" : "bg-[#202226] text-[#7d8087]"}`}>
        {strip.read ? "Read" : "Auto: Off"}
      </div>
      <div
        className={`mt-auto h-[5px] overflow-hidden text-center text-[4px] leading-[5px] whitespace-nowrap ${strip.color ?? "bg-[#0c0d0f] font-bold"} ${
          !strip.color || strip.n === 28 || strip.color === C.sky ? "text-white" : "text-black/70"
        }`}
      >
        {strip.name}
      </div>
    </article>
  );
}

function MainStrip() {
  return (
    <article className="flex w-[32px] shrink-0 flex-col bg-[#212327] text-[4px] text-[#b9bbc0]">
      <div className="mt-[2px] flex h-[7px] items-center justify-between bg-[#1a2d36] pr-[2px] pl-[6px] font-bold">
        Mix FX <Down />
      </div>
      <SlotHeader label="Inserts" on />
      <ul>
        <Slot name="Pro EQ" />
      </ul>
      <SlotHeader label="Post" on />
      <ul className="h-[51px] overflow-hidden">
        {["Pro EQ", "Multiband..", "Kompress..", "Neoverb", "Ozone9El..", "Ozone9El.."].map((name, i) => (
          <Slot key={i} name={name} />
        ))}
      </ul>
      <div className="mt-[2px] flex h-[6px] items-center justify-around text-[#4f7f9c]">
        <span>-1.57</span>
        <span>-1.10</span>
      </div>
      <div className="mt-[2px] flex h-[6px] items-center justify-around font-bold">
        <span>-20.4</span>
        <span>1</span>
      </div>
      <div className="mt-[2px] flex h-[8px] text-[5px]">
        <button aria-label="Mute main" className="flex-1 leading-none">M</button>
        <button aria-label="Solo main" className="flex-1 leading-none">S</button>
      </div>
      <div className="flex h-[8px] items-center gap-[4px] pl-[3px]">
        <button aria-label="Metronome" className="flex h-full w-[9px] items-center justify-center bg-[#3f8fae]">
          <Down className="rotate-180 text-white" />
        </button>
        <span className="h-[4px] w-px bg-[#d3d4d7]" />
        <span className="h-[4px] w-[6px] rounded-full border border-[#b9bbc0]" />
      </div>
      <div className="mt-[3px] flex h-[47px] pl-[3px]">
        <div className="flex w-[9px] shrink-0 flex-col justify-between pb-[2px]">
          <span className="h-[3px] w-[5px] bg-[#49b4e4]" />
          <PanKnob />
        </div>
        <Fader label="Main volume" offset={23} blue />
        <span className="flex h-[46px] w-[5px] shrink-0 items-end gap-px">
          <span className="h-[36px] flex-1 border-t-2 border-[#d5dade] bg-[#5ba0be]" />
          <span className="h-[37px] flex-1 border-t-2 border-[#d5dade] bg-[#5ba0be]" />
        </span>
        <Scale />
      </div>
      <div className="mx-[3px] mt-[7px] h-[7px] bg-[#1a1c1f] text-center leading-[7px] text-[#7d8087]">Auto: Off</div>
      <div className="mt-auto h-[5px] bg-[#0c0d0f] text-center leading-[5px] font-bold text-white">Main</div>
    </article>
  );
}

function Mixer() {
  return (
    <section className="mt-[2px] flex h-[194px]">
      <MixerTools />
      <ChannelList />
      <InstrumentRack />
      <div className="flex min-w-0 flex-1 flex-col bg-[#1b1d20]">
        <div className="flex h-[187px]">
          <div className="flex w-[17px] shrink-0 justify-end overflow-hidden">
            <ChannelStrip cut strip={{ n: 26, name: "St.1", db: "+6.0", fader: 3, color: C.pink }} />
          </div>
          {strips.map((strip) => (
            <ChannelStrip key={strip.n} strip={strip} />
          ))}
          <MainStrip />
        </div>
        <div className="flex flex-1 items-center pl-[44%]">
          <span className="h-[2px] w-[92%] bg-[#606267]" />
        </div>
      </div>
    </section>
  );
}

/* ---------- browser ---------- */

function Browser() {
  return (
    <aside className="flex w-[142px] shrink-0 flex-col border-l-2 border-[#121316] bg-[#27292d] font-[Roboto,sans-serif] text-[5px] leading-none text-[#c3c5c9]">
      <div className="flex h-[11px] items-center bg-[#1c1e22] font-['Liberation_Sans',sans-serif] text-[4px] font-bold">
        <House className="mx-[2px] size-[5px]" strokeWidth={3} />
        <button className="h-full bg-[#3a3d44] px-[2px] text-white">Instruments</button>
        <div className="flex flex-1 justify-between px-[3px]">
          {["Effects", "Loops", "Files", "Cloud", "Shop", "Pool"].map((tab) => (
            <button key={tab}>{tab}</button>
          ))}
        </div>
        <Search className="mr-[2px] size-[5px]" strokeWidth={3} />
      </div>
      <div className="flex h-[8px] items-center bg-[#3a3d44] pr-[2px] pl-[2px] text-[4px] text-[#8b8e95]">
        <span className="w-[24px] text-[#b9bbc0]">Sort by:</span>
        <button className="w-[12px] text-left font-bold text-white">Flat</button>
        <button className="w-[17px] text-left">Folder</button>
        <button className="w-[19px] text-left">Vendor</button>
        <button>Type</button>
        <span className="ml-auto flex items-center gap-[3px] text-[#d3d4d7]">
          <Wrench className="size-[4px] -scale-x-100" strokeWidth={3} />
          <span className="size-[4px] border border-[#d3d4d7]" />
          <span className="size-[4px] bg-white [clip-path:polygon(0_0,100%_0,100%_100%)]" />
        </span>
      </div>
      <div className="flex h-[8px] items-center bg-[#2c2e33] pl-[2px] font-['Liberation_Sans',sans-serif] text-[4px] font-bold">
        <span className="w-[26px]">Instruments</span>
        <span className="w-[7px] text-[#8b8e95]">›</span>
        <span>Woino</span>
      </div>
      <div className="flex pt-[2px]">
        <ul className="grid h-[377px] flex-1 auto-rows-fr">
          {library.map((name) => (
            <li key={name} className={`flex min-h-0 items-center pl-[9px] ${name === "Woino" ? "bg-[#2f80b3] text-white" : ""}`}>
              <span className="w-[4px]">{expandable.includes(name) && <Down className="-rotate-90 text-white" />}</span>
              <svg viewBox="0 0 14 14" className="size-[7px] shrink-0">
                <rect width="14" height="14" rx="1.5" fill="#d5d6d9" />
                <path d="M1 7h12M4 7v5M7 7v5M10 7v5" stroke="#4d5057" strokeWidth="1.4" />
                <path d="M2 3.5h10" stroke="#9a9ca1" strokeWidth="1.5" />
              </svg>
              <span className="pl-[2px] whitespace-nowrap">{name}</span>
            </li>
          ))}
        </ul>
        <div className="w-[7px] px-[3px] pt-[73px]">
          <span className="block h-[296px] w-[2px] bg-[#55575c]" />
        </div>
      </div>
      <div className="flex flex-1 gap-[3px] bg-[#34363c] px-[3px] pt-[7px]">
        <svg viewBox="0 0 26 26" className="size-[13px] shrink-0">
          <rect width="26" height="26" fill="#d9dadc" />
          <path d="M4 0h3v10H4zM9 0h3v10H9zM15 0h3v10h-3zM20 0h3v10h-3z" fill="#222428" />
          <path d="M8 0v16M14 0v16M19 0v16" stroke="#222428" />
          <rect y="16" width="26" height="10" fill="#8f9196" />
        </svg>
        <div className="flex flex-col gap-[3px] text-[4px]">
          <span className="text-[6px]">Woino</span>
          <span className="flex">
            <span className="w-[23px]">Vendor:</span>Felt Instruments
          </span>
          <span className="flex">
            <span className="w-[23px]">Category:</span>VST2
          </span>
        </div>
      </div>
    </aside>
  );
}

/* ---------- transport ---------- */

function Readout({ value, caption, className }: { value: string; caption: string; className: string }) {
  return (
    <div className={`flex shrink-0 flex-col items-center gap-[1px] whitespace-nowrap ${className}`}>
      <span className="text-[5px] leading-[6px] font-bold">{value}</span>
      <span className="text-[4px] leading-[5px] text-[#a5a8ae]">{caption}</span>
    </div>
  );
}

function TransportButton({ label, d }: { label: string; d: string }) {
  return (
    <button aria-label={label} className="flex w-[10px] justify-center">
      <svg viewBox="0 0 12 10" className="h-[6px] w-[7px]">
        <path d={d} fill="#d3d4d7" />
      </svg>
    </button>
  );
}

function BottomBar() {
  return (
    <footer className="mt-px flex h-[18px] bg-[#43464e] text-[5px] text-[#e2e3e6]">
      <div className="flex-[337]" />
      <div className="flex w-[543px] items-center bg-[#15171a] pl-[8px] [clip-path:polygon(0_0,100%_0,98%_100%,1%_100%)]">
        <div className="flex w-[13px] flex-col items-center gap-[1px] text-[4px] leading-[5px] text-[#a5a8ae]">
          <svg viewBox="0 0 16 10" className="h-[6px] w-[9px]">
            <circle cx="8" cy="5" r="4" fill="none" stroke="#55575c" />
            <path d="M0 4h3v3H0z" fill="#7d8087" />
            <path d="M13 4h3v3h-3z" fill="#d4662a" />
          </svg>
          MIDI
        </div>
        <div className="ml-[2px] flex w-[24px] flex-col items-center gap-[1px] text-[4px] leading-[5px] text-[#a5a8ae]">
          <div className="flex h-[6px] w-full flex-col justify-center gap-px">
            <span className="h-[2px] w-[15px] bg-[#4397c4]" />
            <span className="h-[2px] w-full bg-[#26333c]" />
          </div>
          Performance
        </div>
        <span className="mx-[6px] size-[8px] shrink-0 rounded-full border border-dashed border-[#a5a8ae]" />
        <Readout value="44.1 kHz" caption="258.8 ms" className="w-[23px]" />
        <Readout value="6:12 days" caption="Record Max" className="ml-[2px] w-[26px]" />
        <Readout value="00:01:38.618" caption="Seconds" className="ml-[6px] w-[33px]" />
        <div className="ml-[7px] flex w-[51px] flex-col items-center">
          <span className="text-[7px] leading-[8px] font-bold">00069.03.02.95</span>
          <span className="text-[4px] leading-[4px] text-[#a5a8ae]">Bars</span>
        </div>
        <div className="ml-[6px] flex items-center">
          <TransportButton label="Previous marker" d="M9 0v10L3 5z" />
          <TransportButton label="Rewind" d="M6 0v10L0 5zM12 0v10L6 5z" />
          <TransportButton label="Forward" d="M0 0v10l6-5zM6 0v10l6-5z" />
          <TransportButton label="Next marker" d="M3 0v10l6-5z" />
          <TransportButton label="Return to zero" d="M1 0h2v10H1zM10 0v10L4 5z" />
          <button aria-label="Stop" className="ml-[3px] flex w-[13px] justify-center">
            <span className="size-[8px] bg-[#b9bbc0]" />
          </button>
          <button aria-label="Play" className="flex w-[13px] justify-center">
            <svg viewBox="0 0 8 8" className="size-[8px]">
              <path d="M1 0v8l7-4z" fill="#4fe83a" />
            </svg>
          </button>
          <button aria-label="Record" className="flex w-[13px] justify-center">
            <span className="size-[8px] rounded-full bg-[#c9cacd]" />
          </button>
          <button aria-label="Loop" className="flex w-[18px] justify-center">
            <svg viewBox="0 0 24 16" className="h-[8px] w-[12px]">
              <path d="M9 14H6C3 14 1 11 1 8s2-7 6-7 6 4 5 7c-1 5 1 6 4 6s7-2 7-6-3-7-7-7c-3 0-4 2-4 5M9 14l-3-3M9 14l-3 2" fill="none" stroke="#b9bbc0" strokeWidth="1.8" />
            </svg>
          </button>
        </div>
        <div className="ml-[1px] flex flex-col gap-[1px] text-[5px] leading-[5px] font-bold whitespace-nowrap">
          <span><span className="pr-[3px] font-normal text-[#5f8fae]">L</span>00001.01.01.00</span>
          <span><span className="pr-[3px] font-normal text-[#5f8fae]">R</span>00107.01.01.00</span>
        </div>
        <Readout value="On" caption="Sync" className="ml-[5px] w-[12px]" />
        <svg viewBox="0 0 34 24" className="ml-[4px] h-[12px] w-[17px] shrink-0">
          <path d="M1 5h5l2 3h4M20 6h12M24 3v6M28 3v6M20 18h12M24 15l6 6" stroke="#a5a8ae" strokeWidth="1.6" fill="none" />
          <circle cx="7" cy="18" r="3.5" fill="none" stroke="#a5a8ae" strokeWidth="1.6" />
        </svg>
        <div className="ml-[3px] flex w-[22px] flex-col items-center gap-[1px] text-[4px] leading-[5px] text-[#a5a8ae]">
          <span className="flex h-[6px] items-center gap-[4px]">
            <span className="size-[4px] rounded-full bg-[#49a5dc]" />
            <Wrench className="size-[4px] -scale-x-100" strokeWidth={3} />
            <Down className="rotate-180 text-white" />
          </span>
          Metronome
        </div>
        <Readout value="4 / 4" caption="Timing" className="ml-[5px] w-[14px]" />
        <Readout value="-" caption="Key" className="ml-[4px] w-[12px]" />
        <Readout value="167.00" caption="Tempo" className="ml-[3px] w-[17px]" />
        <div className="ml-[5px] flex w-[25px] flex-col gap-[2px]">
          <span className="flex h-[4px] bg-[#26333c]">
            <span className="w-[22px] bg-[#4397b8]" />
          </span>
          <span className="flex h-[4px] bg-[#26333c]">
            <span className="w-[7px] bg-[#4397b8]" />
          </span>
        </div>
        <span className="mb-[4px] ml-[3px] h-[4px] w-[6px] self-end rounded-full border border-[#3cc3e0] bg-[#1f6f86]" />
      </div>
      <div className="flex flex-[400] justify-end">
        <button className="w-[22px]">Edit</button>
        <button className="w-[20px] bg-[#2f89cc]">Mix</button>
        <button className="w-[25px] border-l border-[#25679a] bg-[#2f89cc]">Browse</button>
      </div>
    </footer>
  );
}

/* ---------- dock ---------- */

const dockIcons: [string, ReactNode][] = [
  ["Finder", (
    <>
      <rect width="24" height="24" rx="5" fill="#e6eef5" />
      <path d="M5 0h8c-2 4-3 8-3 13h3c0 4 0 7 1 11H5a5 5 0 0 1-5-5V5a5 5 0 0 1 5-5z" fill="#2a9df0" />
      <path d="M7 7v3M17 7v3M5 16c4 4 10 4 14 0" stroke="#16395c" strokeWidth="1.4" fill="none" />
    </>
  )],
  ["Siri", (
    <>
      <rect width="24" height="24" rx="5" fill="#252336" />
      <circle cx="12" cy="12" r="9" fill="#3b3f9e" />
      <path d="M4 15c5-9 10-9 16-6-5 1-8 9-16 6z" fill="#e0559f" />
      <path d="M5 9c6-1 9 8 14 7-5 4-11 2-14-7z" fill="#39c5dc" />
      <path d="M9 11l4-3 2 5-4 2z" fill="#fff" />
    </>
  )],
  ["Launchpad", (
    <>
      <rect width="24" height="24" rx="5" fill="#b3b7bd" />
      {["#e85048", "#f0a030", "#58c050", "#50b8e8", "#f4d040", "#e05890", "#8858d0", "#f07038", "#3c80e0"].map((fill, i) => (
        <rect key={fill} x={4 + (i % 3) * 6} y={4 + Math.floor(i / 3) * 6} width="4.4" height="4.4" rx="1" fill={fill} />
      ))}
    </>
  )],
  ["Calendar", (
    <>
      <rect width="24" height="24" rx="5" fill="#f7f7f7" />
      <path d="M5 0h14a5 5 0 0 1 5 5v3H0V5a5 5 0 0 1 5-5z" fill="#ef4136" />
      <text x="12" y="6.5" fontSize="6" fontWeight="bold" fill="#fff" textAnchor="middle">JAN</text>
      <text x="12" y="20" fontSize="13" fill="#333" textAnchor="middle">24</text>
    </>
  )],
  ["App Store", (
    <>
      <rect width="24" height="24" rx="5" fill="#1f86ee" />
      <path d="M13 5L7 17M11 5l6 12M4 14.5h10M17 14.5h3" stroke="#fff" strokeWidth="2" strokeLinecap="round" />
    </>
  )],
  ["System Preferences", (
    <>
      <rect width="24" height="24" rx="5" fill="#8a8d92" />
      <circle cx="12" cy="12" r="9" fill="#3a3c40" stroke="#d0d2d5" strokeWidth="1" />
      <circle cx="12" cy="12" r="6" fill="none" stroke="#b0b3b8" strokeWidth="2.5" strokeDasharray="1.5 1" />
      <path d="M12 12V4M12 12l7 4M12 12l-7 4" stroke="#b0b3b8" strokeWidth="1.5" />
    </>
  )],
  ["Chrome", (
    <>
      <rect width="24" height="24" rx="5" fill="#f3f3f3" />
      <path d="M12 12L3.3 7A10 10 0 0 1 20.7 7z" fill="#e6443a" />
      <path d="M12 12l8.7-5A10 10 0 0 1 12 22z" fill="#f9c922" />
      <path d="M12 12v10A10 10 0 0 1 3.3 7z" fill="#30a552" />
      <circle cx="12" cy="12" r="4.6" fill="#fff" />
      <circle cx="12" cy="12" r="3.6" fill="#3f80ee" />
    </>
  )],
  ["Spotify", <FaSpotify key="s" size="24" color="#1ed760" />],
  ["Studio One", (
    <>
      <path d="M0 13l9-1 4 4 8 8-9-5-5-3-7 1z" fill="#2e62ad" />
      <path d="M22 0l-9 7-3 5 5 4 3-3z" fill="#22344f" />
      <path d="M22 0l-4 13 2 7-5-4z" fill="#3d79c4" />
    </>
  )],
  ["Logic", (
    <>
      <rect width="24" height="24" rx="5" fill="#d3d6db" />
      <rect x="2" y="2" width="20" height="20" rx="4" fill="#2b3546" />
      <circle cx="12" cy="12" r="7.5" fill="#c9d4e2" />
      <path d="M12 5v14M5 12h14M7 7l10 10M17 7L7 17" stroke="#5c7088" />
      <circle cx="12" cy="12" r="2.5" fill="#e8eef5" />
    </>
  )],
  ["Spitfire", (
    <>
      <rect width="24" height="24" fill="#050505" />
      <circle cx="12" cy="12" r="9.5" fill="none" stroke="#fff" strokeWidth="2.2" />
      <path d="M4 17c4 0 4-5 8-5 5 0 6-5 2-5-3 0-4 2-5 3M9 15c3 1 7 0 11-5" fill="none" stroke="#fff" strokeWidth="2.4" />
    </>
  )],
  ["Native Access", (
    <>
      <rect width="24" height="24" fill="#10206c" />
      <circle cx="12" cy="12" r="9" fill="none" stroke="#fff" strokeWidth="2" />
      <circle cx="12" cy="12" r="4.5" fill="none" stroke="#fff" strokeWidth="2" />
      <path d="M12 3v5M4.500 17l4-3M19.500 17l-4-3" stroke="#fff" strokeWidth="2" />
    </>
  )],
  ["Audio Hub", (
    <>
      <rect width="24" height="24" fill="#f5f5f5" />
      <circle cx="12" cy="14" r="6.5" fill="none" stroke="#111" strokeWidth="1.5" />
      <circle cx="12" cy="4.5" r="2.3" fill="#111" />
      <circle cx="4.5" cy="19" r="2.3" fill="#111" />
      <circle cx="19.5" cy="19" r="2.3" fill="#111" />
      <circle cx="12" cy="14" r="2.5" fill="#111" />
    </>
  )],
  ["Arcade", (
    <>
      <rect width="24" height="24" rx="3" fill="#d5d5d5" />
      <path d="M0 2h24v3H0z" fill="#e85e9a" />
      <path d="M0 5h24v3H0z" fill="#5bb8e0" />
      <path d="M0 8h24v2H0z" fill="#f0c040" />
      <text x="12" y="18.5" fontSize="7" fill="#333" textAnchor="middle">arcade</text>
    </>
  )],
  ["Play", (
    <>
      <circle cx="12" cy="12" r="12" fill="#c9898c" />
      <circle cx="12" cy="12" r="10.8" fill="#191415" />
      <circle cx="12" cy="6" r="2.3" fill="none" stroke="#aaa" />
      <circle cx="12" cy="10.5" r="2" fill="none" stroke="#aaa" />
      <text x="12" y="19" fontSize="6.5" fontWeight="bold" fill="#e8323c" textAnchor="middle">PLAY</text>
    </>
  )],
  ["MuseScore", (
    <>
      <circle cx="12" cy="12" r="11.5" fill="#f4f1ea" stroke="#c8c0b0" />
      <text x="12" y="16" fontSize="12" fill="#4a6a94" textAnchor="middle">mű</text>
    </>
  )],
  ["Sibelius", (
    <>
      <rect width="24" height="24" rx="3" fill="#8e2418" />
      <path d="M13 11h11v13H13z" fill="#f0ece4" />
      <path d="M16 11v13M20 11v13" stroke="#222" strokeWidth="1.5" />
      <path d="M3 13c3-3 7 0 4 5l-4 5M16 15c-4-3-2-5 1-8 2-3 1-6 0-6s-3 5-1 11" fill="none" stroke="#fff" strokeWidth="1.8" />
    </>
  )],
  ["Notes", (
    <>
      <rect width="24" height="24" rx="5" fill="#f8f7f2" />
      <path d="M5 0h14a5 5 0 0 1 5 5v2H0V5a5 5 0 0 1 5-5z" fill="#f7ca37" />
      <path d="M3 12h18M3 17h18" stroke="#d0cec6" />
    </>
  )],
  ["Music", (
    <>
      <rect width="24" height="24" rx="5" fill="#f9344f" />
      <path d="M9.5 17V7l8-2v10" fill="none" stroke="#fff" strokeWidth="1.8" />
      <ellipse cx="7.7" cy="17.3" rx="2.5" ry="2" fill="#fff" />
      <ellipse cx="15.7" cy="15.3" rx="2.5" ry="2" fill="#fff" />
    </>
  )],
  ["iMovie", (
    <>
      <path d="M12 0l3.4 8 8.600.8-6.400 5.700 1.900 8.500L12 18.600 4.500 23l1.900-8.500L0 8.800 8.600 8z" fill="#cdbcf0" />
      <path d="M12 3.500l2.400 6 6.200.6-4.700 4.100 1.400 6.200L12 17l-5.300 3.400 1.400-6.200-4.700-4.100 6.200-.6z" fill="#6a28c8" />
    </>
  )],
  ["Disk Utility", (
    <>
      <rect width="24" height="24" rx="5" fill="#dfe5ec" />
      <path d="M6 4v7c0 6 7 6 7 0V4M10 16c0 6 9 5 8-2" fill="none" stroke="#5c6f84" strokeWidth="1.5" />
      <rect x="14" y="14" width="9" height="9" fill="#8a98a8" />
    </>
  )],
  ["Discord", (
    <>
      <circle cx="12" cy="12" r="12" fill="#5c6fc9" />
      <FaDiscord x="5" y="5" size="14" color="#fff" />
    </>
  )],
  ["QuickTime", (
    <>
      <rect width="24" height="24" rx="5" fill="#4a4e54" />
      <circle cx="12" cy="12" r="7.5" fill="#1f4668" stroke="#8ccaf0" strokeWidth="3.5" />
      <path d="M13 13l6 6" stroke="#d9eefb" strokeWidth="3" />
    </>
  )],
];

const dockRecent: [string, ReactNode][] = [
  ["Splice", (
    <>
      <circle cx="12" cy="12" r="12" fill="#fff" />
      <path d="M14 5l-5 4.500v3l6-1v3L10 19" fill="none" stroke="#000" strokeWidth="4.500" strokeLinejoin="round" />
    </>
  )],
  ["Keyboard Maestro", (
    <>
      <rect width="24" height="24" fill="#dfe2e6" />
      <path d="M4 20V5l5 8 5-8v15M12 5l4 7 4-7M16 12v8" stroke="#8a98a6" strokeWidth="1.8" fill="none" />
    </>
  )],
  ["Cue", (
    <>
      <rect width="24" height="24" fill="#3c9ce0" />
      <path d="M3 6h8v12H3zM15 6h6v12h-6z" fill="#fff" />
      <path d="M6 9v6M8.500 9v6M18 9v6" stroke="#2878b4" strokeWidth="1.500" />
    </>
  )],
];

const dockFiles: [string, ReactNode][] = [
  ["Downloads", (
    <>
      <path d="M4 0h12l5 5v19H4z" fill="#f2f2f2" />
      <path d="M16 0v5h5z" fill="#bfc3c8" />
      <rect x="8" y="10" width="9" height="8" fill="#567066" />
      <rect x="6" y="18" width="13" height="3" fill="#a0a4a8" />
    </>
  )],
  ["Trash", (
    <>
      <path d="M3 3h18l-2 21H5z" fill="#76797d" />
      <ellipse cx="12" cy="3" rx="9" ry="2.5" fill="#b8babd" />
      <path d="M7 1l4 2 3-2 3 2" stroke="#eee" fill="none" />
      <path d="M8 7l1 15M12 7v15M16 7l-1 15" stroke="#94979b" />
    </>
  )],
];

function DockGroup({ items }: { items: [string, ReactNode][] }) {
  return items.map(([name, art]) => (
    <button key={name} aria-label={name} className="flex w-[22px] flex-col items-center gap-[3px]">
      <svg viewBox="0 0 24 24" className="size-[22px]">
        {art}
      </svg>
      <span className={`size-px rounded-full ${["Finder", "Studio One", "QuickTime"].includes(name) ? "bg-white" : ""}`} />
    </button>
  ));
}

function Dock() {
  return (
    <div className="mx-auto mt-[2px] flex h-[30px] w-fit items-start gap-[4px] rounded-[6px] border border-[#2c2c2e] bg-[#171719] px-[2px] pt-[1px]">
      <DockGroup items={dockIcons} />
      <span className="mx-[4px] h-[22px] w-px bg-[#3a3a3c]" />
      <DockGroup items={dockRecent} />
      <span className="mx-[4px] h-[22px] w-px bg-[#3a3a3c]" />
      <DockGroup items={dockFiles} />
    </div>
  );
}

/* ---------- page ---------- */

export default function App() {
  return (
    <div className="min-h-screen bg-black pt-[91px] font-['Liberation_Sans',Arial,sans-serif] leading-none">
      <MenuBar />
      <main className="overflow-hidden rounded-[5px] bg-[#0a0b0d]">
        <header className="flex h-[11px] items-center border-t border-[#4a4a4c] bg-[#19191b] pl-[2px] text-[5px] text-[#77797d]">
          <span className="flex flex-1 gap-[4px]">
            <span className="size-[4px] rounded-full bg-[#47484b]" />
            <span className="size-[4px] rounded-full bg-[#47484b]" />
            <span className="size-[4px] rounded-full bg-[#47484b]" />
          </span>
          <span className="flex items-center gap-[2px] font-bold">
            <Film className="size-[5px]" strokeWidth={3} />
            Studio One - HCBAM
          </span>
          <span className="flex-1" />
        </header>
        <Toolbar />
        <div className="mt-[2px] flex">
          <div className="min-w-0 flex-1">
            <Arrangement />
            <Mixer />
          </div>
          <Browser />
        </div>
        <BottomBar />
      </main>
      <Dock />
      {/* pointer floats above whatever it hovers */}
      <svg viewBox="0 0 10 14" className="absolute top-[416px] left-[51.7%] h-[8px] w-[5px]">
        <path d="M1 1v10l2.5-2 2 4 1.5-1-2-4h3.5z" fill="#111" stroke="#fff" />
      </svg>
    </div>
  );
}
